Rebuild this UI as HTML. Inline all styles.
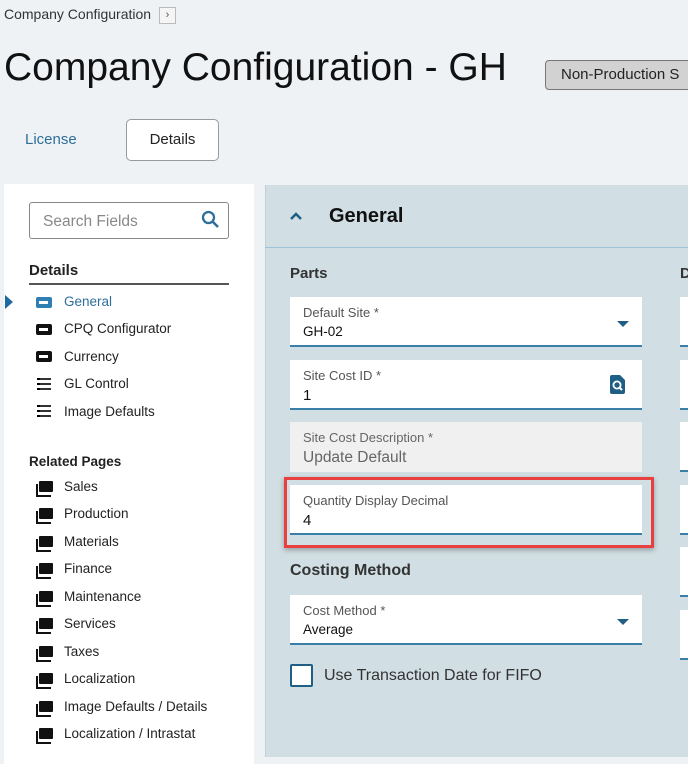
<!DOCTYPE html>
<html><head><style>
*{margin:0;padding:0;box-sizing:border-box}
body{width:688px;height:757px;overflow:hidden;background:#eef2f5;font-family:"Liberation Sans",sans-serif;position:relative;color:#1a1a1a}
.a{position:absolute;white-space:nowrap}
.f{position:absolute;left:290px;width:352px;height:50px;background:#fff;border-bottom:2px solid #3a7fa8}
.f .l{position:absolute;left:13px;top:8px;font-size:13px;color:#555}
.f .v{position:absolute;left:13px;top:27px;font-size:13.5px;color:#111}
.rf{position:absolute;left:680px;width:20px;height:50px;background:#fff;border-bottom:2px solid #3a7fa8}
.nav{position:absolute;left:64px;font-size:13.5px;color:#222}
.ic{position:absolute;left:36px;width:16px;height:11px;background:#111;border-radius:2px}
.ic::after{content:"";position:absolute;left:3px;top:4px;width:9px;height:3px;background:#fff}
.li{position:absolute;left:37px;width:14px;height:12px}
.li i{position:absolute;left:0;width:14px;height:2px;background:#333}
.li i::before{content:"";position:absolute;left:0;top:0;width:3px;height:2px;background:#000}
.rp{position:absolute;left:36px;width:17px;height:14px}
.rp::before{content:"";position:absolute;left:0;top:3px;width:13px;height:11px;border-left:2px solid #111;border-bottom:2px solid #111}
.rp::after{content:"";position:absolute;left:3px;top:0;width:14px;height:11px;background:#111;border-radius:1px}
</style></head><body>
<div class="a" style="left:4px;top:6px;font-size:14px;color:#333">Company Configuration</div>
<div class="a" style="left:159px;top:7px;width:17px;height:17px;border:1px solid #bbb;font-size:11px;text-align:center;line-height:15px;color:#555;background:#f5f5f5">&rsaquo;</div>
<div class="a" style="left:4px;top:46px;font-size:39px;color:#111">Company Configuration - GH</div>
<div class="a" style="left:545px;top:60px;width:160px;height:30px;background:#d2d2d2;border:1px solid #777;border-radius:4px;font-size:15px;line-height:28px;padding-left:15px;color:#222">Non-Production S</div>
<div class="a" style="left:25px;top:131px;font-size:15px;color:#2e6f98">License</div>
<div class="a" style="left:126px;top:119px;width:93px;height:42px;background:#fff;border:1px solid #999;border-radius:5px;font-size:15px;text-align:center;line-height:40px;color:#222">Details</div>

<div class="a" style="left:4px;top:184px;width:250px;height:580px;background:#fff"></div>
<div class="a" style="left:29px;top:202px;width:200px;height:37px;border:1px solid #888;border-radius:3px;font-size:15.5px;color:#888;padding:10px 0 0 13px">Search Fields</div>
<svg class="a" style="left:201px;top:210px" width="19" height="19" viewBox="0 0 19 19"><circle cx="7.5" cy="7.5" r="5.5" fill="none" stroke="#2d6f9a" stroke-width="2.3"/><path d="M11.5 11.5L17 17" stroke="#2d6f9a" stroke-width="2.6"/></svg>
<div class="a" style="left:29px;top:262px;font-size:15px;font-weight:bold;color:#222">Details</div>
<div class="a" style="left:29px;top:283px;width:200px;height:2px;background:#555"></div>
<div class="a" style="left:5px;top:295px;width:0;height:0;border-top:7px solid transparent;border-bottom:7px solid transparent;border-left:8px solid #1d6aa1"></div>
<div class="ic" style="top:297px;background:#2f7fb3"></div><div class="nav" style="top:294px;color:#2e6f98">General</div>
<div class="ic" style="top:324px"></div><div class="nav" style="top:321px">CPQ Configurator</div>
<div class="ic" style="top:351px"></div><div class="nav" style="top:349px">Currency</div>
<div class="li" style="top:378px"><i style="top:0"></i><i style="top:5px"></i><i style="top:10px"></i></div><div class="nav" style="top:376px">GL Control</div>
<div class="li" style="top:405px"><i style="top:0"></i><i style="top:5px"></i><i style="top:10px"></i></div><div class="nav" style="top:404px">Image Defaults</div>
<div class="a" style="left:29px;top:454px;font-size:13.5px;font-weight:bold;color:#222">Related Pages</div>
<div class="rp" style="top:481px"></div><div class="nav" style="top:479px">Sales</div>
<div class="rp" style="top:508px"></div><div class="nav" style="top:506px">Production</div>
<div class="rp" style="top:536px"></div><div class="nav" style="top:534px">Materials</div>
<div class="rp" style="top:563px"></div><div class="nav" style="top:561px">Finance</div>
<div class="rp" style="top:591px"></div><div class="nav" style="top:589px">Maintenance</div>
<div class="rp" style="top:618px"></div><div class="nav" style="top:616px">Services</div>
<div class="rp" style="top:646px"></div><div class="nav" style="top:644px">Taxes</div>
<div class="rp" style="top:673px"></div><div class="nav" style="top:671px">Localization</div>
<div class="rp" style="top:701px"></div><div class="nav" style="top:699px">Image Defaults / Details</div>
<div class="rp" style="top:728px"></div><div class="nav" style="top:726px">Localization / Intrastat</div>

<div class="a" style="left:265px;top:185px;width:423px;height:572px;background:#d1dee3;border-left:1px solid #c4cfd4"></div>
<div class="a" style="left:265px;top:247px;width:423px;height:1px;background:#9ec3d6"></div>
<svg class="a" style="left:289px;top:211px" width="14" height="10" viewBox="0 0 14 10"><path d="M2 8L7 3L12 8" fill="none" stroke="#1f5f86" stroke-width="2.5"/></svg>
<div class="a" style="left:329px;top:205px;font-size:20px;font-weight:bold;color:#111">General</div>
<div class="a" style="left:290px;top:265px;font-size:15px;font-weight:bold;color:#333">Parts</div>
<div class="a" style="left:680px;top:265px;font-size:15px;font-weight:bold;color:#333">D</div>

<div class="f" style="top:297px"><div class="l">Default Site *</div><div class="v">GH-02</div></div>
<svg class="a" style="left:617px;top:321px" width="12" height="7"><path d="M0 0H12L6 6Z" fill="#1f5f86"/></svg>
<div class="f" style="top:360px"><div class="l">Site Cost ID *</div><div class="v" style="font-size:15px">1</div></div>
<svg class="a" style="left:609px;top:375px" width="17" height="19" viewBox="0 0 17 19"><path d="M2 0H11L16 5V17Q16 19 14 19H3Q1 19 1 17V2Q1 0 3 0Z" fill="#1f5f86"/><circle cx="8" cy="10" r="3.6" fill="none" stroke="#fff" stroke-width="1.8"/><path d="M10.5 12.5L13 15" stroke="#fff" stroke-width="2"/></svg>
<div class="f" style="top:422px;background:#f0f0f0;border-bottom:none"><div class="l" style="color:#666">Site Cost Description *</div><div class="v" style="font-size:15.5px;color:#666">Update Default</div></div>
<div class="a" style="left:284px;top:477px;width:370px;height:71px;border:3px solid #e8403f;box-shadow:0 2px 5px rgba(0,0,0,.3)"></div>
<div class="f" style="top:485px"><div class="l">Quantity Display Decimal</div><div class="v" style="font-size:15px">4</div></div>
<div class="a" style="left:290px;top:562px;font-size:16px;font-weight:bold;color:#333">Costing Method</div>
<div class="f" style="top:595px"><div class="l">Cost Method *</div><div class="v">Average</div></div>
<svg class="a" style="left:617px;top:619px" width="12" height="7"><path d="M0 0H12L6 6Z" fill="#1f5f86"/></svg>
<div class="a" style="left:290px;top:664px;width:23px;height:23px;border:2px solid #1f5f86;border-radius:2px;background:#fff"></div>
<div class="a" style="left:324px;top:667px;font-size:16px;color:#333">Use Transaction Date for FIFO</div>

<div class="rf" style="top:297px"></div><div class="rf" style="top:360px"></div><div class="rf" style="top:422px"></div><div class="rf" style="top:485px"></div><div class="rf" style="top:547px"></div><div class="rf" style="top:610px"></div>
</body></html>
